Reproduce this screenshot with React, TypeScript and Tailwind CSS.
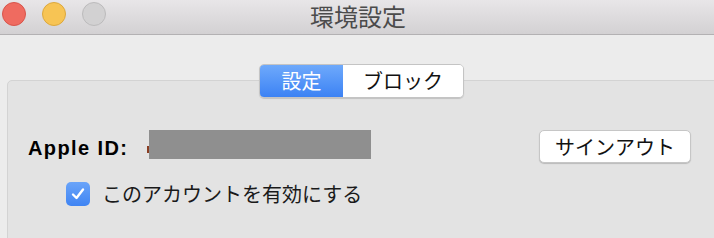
import React from "react";

const jp = { fontFamily: '"Noto Sans CJK JP", "Noto Sans", sans-serif' };

export default function App() {
  return (
    <div className="w-[714px] h-[238px] overflow-hidden bg-[#ececec] flex flex-col" style={jp}>
      {/* Title bar */}
      <div className="h-[35px] shrink-0 grid grid-cols-[1fr_auto_1fr] items-start bg-gradient-to-b from-[#e8e6e8] to-[#d3d1d3] border-b border-[#b3b1b3]">
        <div className="flex items-center gap-[16px] pl-[2px] pt-[2px]">
          <div className="w-[24px] h-[24px] rounded-full bg-[#ef6b60] border border-[#d8554b]" />
          <div className="w-[24px] h-[24px] rounded-full bg-[#f7c454] border border-[#dca83d]" />
          <div className="w-[24px] h-[24px] rounded-full bg-[#d2d1d2] border border-[#bcbbbc]" />
        </div>
        <div className="text-[24px] leading-[28px] text-[#4b4b4b] pt-[2px] pl-[2px]">環境設定</div>
        <div />
      </div>

      {/* Body */}
      <div className="flex-1 pl-[7px] pt-[45px]">
        <div className="mr-[-20px] h-[200px] rounded-tl-[5px] border border-[#d3d3d3] bg-[#e3e3e3] flex flex-col">
          {/* segmented control */}
          <div className="ml-[251px] -mt-[17px] flex w-[205px] h-[34px] rounded-[5px] border border-[#c4c4c4] shadow-[0_1px_1px_rgba(0,0,0,0.15)] overflow-hidden">
            <div className="w-[83px] flex items-center justify-center bg-gradient-to-b from-[#6ea9fb] to-[#3c82f4] text-white text-[20px] leading-[24px]">
              設定
            </div>
            <div className="flex-1 flex items-center justify-center bg-white text-[#111] text-[20px] leading-[24px]">
              ブロック
            </div>
          </div>

          {/* Apple ID row */}
          <div className="mt-[32px] flex items-start">
            <div
              className="ml-[20px] w-[119px] h-[33px] flex items-center mt-[1px] text-[20px] font-bold tracking-[1.4px] text-black"
              style={{ fontFamily: '"Liberation Sans", Arial, sans-serif' }}
            >
              Apple ID:
            </div>
            <div className="w-[2px] h-[7px] mt-[16px] bg-[#8a3d22]" />
            <div className="w-[222px] h-[29px] bg-[#8f8f8f]" />
            <button className="ml-[168px] w-[152px] h-[33px] rounded-[5px] bg-white border border-[#c6c6c6] shadow-[0_1px_1px_rgba(0,0,0,0.18)] text-[20px] leading-[24px] text-[#111] flex items-center justify-center">
              サインアウト
            </button>
          </div>

          {/* Checkbox row */}
          <div className="mt-[18px] ml-[58px] flex items-center gap-[12px]">
            <div className="w-[24px] h-[24px] rounded-[5px] bg-gradient-to-b from-[#6aa4f9] to-[#3f84f3] flex items-center justify-center">
              <svg width="16" height="16" viewBox="0 0 16 16" fill="none">
                <path d="M3 8.5 L6.5 12 L13 3.5" stroke="white" strokeWidth="2.4" strokeLinecap="round" strokeLinejoin="round" />
              </svg>
            </div>
            <div className="text-[20px] leading-[24px] text-[#1a1a1a]">このアカウントを有効にする</div>
          </div>
        </div>
      </div>
    </div>
  );
}
